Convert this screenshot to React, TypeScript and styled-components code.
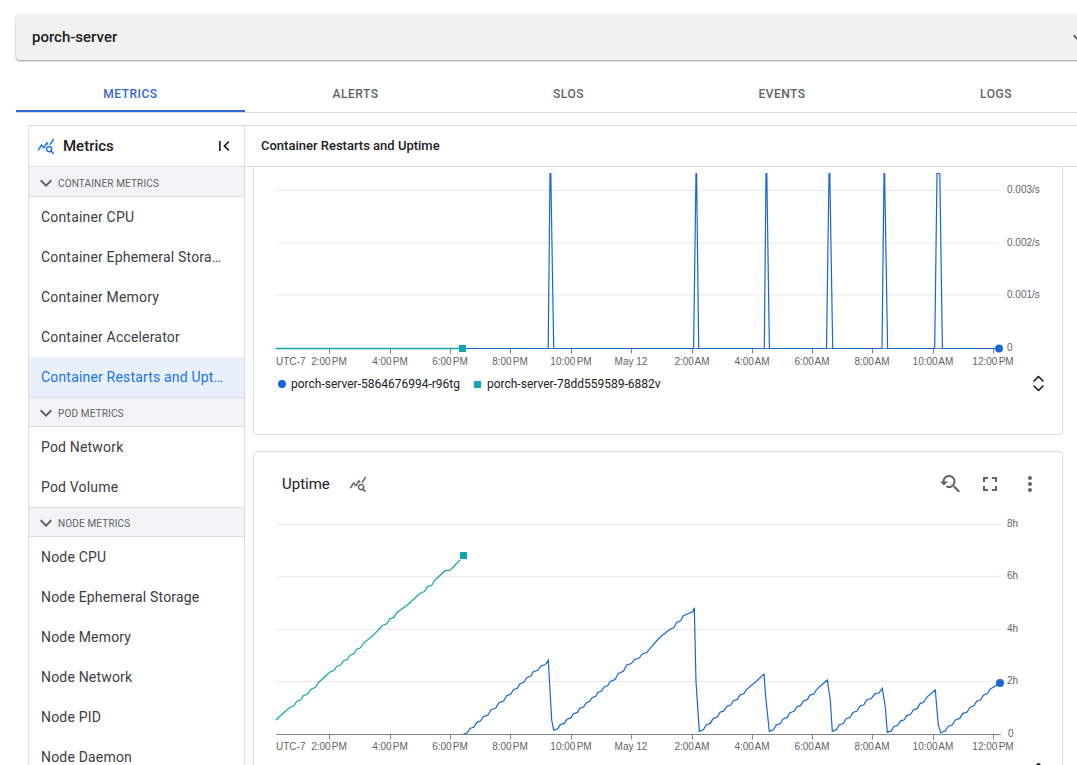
import React from "react";
import styled, { createGlobalStyle } from "styled-components";
import { ChevronsUpDown } from "lucide-react";
import {
  MdExpandMore,
  MdFirstPage,
  MdFullscreen,
  MdMoreVert,
  MdQueryStats,
  MdYoutubeSearchedFor,
} from "react-icons/md";

const BLUE = "#1967d2";
const TEAL = "#12a4af";
const LINE = "#dadce0";

const GlobalStyle = createGlobalStyle`
  html, body {
    margin: 0;
    height: 100%;
    overflow: hidden;
    background: #fff;
    font-family: Roboto, "Liberation Sans", sans-serif;
  }
`;

const Page = styled.div`
  box-sizing: border-box;
  width: 1115px;
  height: 765px;
  padding: 14px 16px 0;
  overflow: hidden;
  display: flex;
  flex-direction: column;
`;

const Header = styled.div`
  flex: none;
  height: 46px;
  display: flex;
  align-items: center;
  justify-content: space-between;
  padding: 0 8px 0 16px;
  background: #f1f1f1;
  border-radius: 4px;
  box-shadow: 0 1px 2px rgba(60, 64, 67, 0.55);
  font-size: 15px;
  font-weight: 500;
  color: #202124;
  svg {
    color: #5f6368;
    margin-top: 2px;
  }
`;

const TabBar = styled.div`
  flex: none;
  margin-top: 14px;
  display: grid;
  grid-template-columns: 229px 221px 205px 222px 206px;
  border-bottom: 1px solid ${LINE};
`;

const Tab = styled.div<{ $active?: boolean }>`
  box-sizing: border-box;
  height: 38px;
  padding-top: 4px;
  display: flex;
  align-items: center;
  justify-content: center;
  font-size: 12px;
  font-weight: 500;
  letter-spacing: 0.5px;
  color: ${(p) => (p.$active ? "#3367d6" : "#5f6368")};
  border-bottom: 2px solid ${(p) => (p.$active ? "#3367d6" : "transparent")};
`;

const Main = styled.div`
  flex: 1;
  min-height: 0;
  display: flex;
  margin: 12px -16px 0 12px;
  border-top: 1px solid ${LINE};
`;

const Sidebar = styled.div`
  box-sizing: border-box;
  flex: none;
  width: 217px;
  border-left: 1px solid ${LINE};
  border-right: 1px solid ${LINE};
  border-top-left-radius: 4px;
`;

const SidebarTitle = styled.div`
  box-sizing: border-box;
  height: 41px;
  display: flex;
  align-items: center;
  gap: 8px;
  padding: 0 10px 0 8px;
  border-bottom: 1px solid ${LINE};
  font-size: 15px;
  font-weight: 500;
  color: #202124;
  svg:first-child {
    color: #1a73e8;
  }
  svg:last-child {
    margin-left: auto;
  }
`;

const Group = styled.div`
  box-sizing: border-box;
  height: 30px;
  display: flex;
  align-items: center;
  padding: 2px 0 0 5px;
  background: #f1f3f4;
  border-top: 1px solid ${LINE};
  border-bottom: 1px solid ${LINE};
  font-size: 10px;
  letter-spacing: 0.15px;
  color: #5f6368;
  text-transform: uppercase;
  &:first-child {
    border-top: none;
    padding-top: 3px;
  }
`;

const Item = styled.div<{ $active?: boolean }>`
  box-sizing: border-box;
  height: 40px;
  line-height: 40px;
  padding: 0 20px 0 12px;
  font-size: 14px;
  letter-spacing: 0.18px;
  color: ${(p) => (p.$active ? "#1a73e8" : "#3c4043")};
  background: ${(p) => (p.$active ? "#e8f0fe" : "transparent")};
  white-space: nowrap;
  overflow: hidden;
  text-overflow: ellipsis;
`;

const Content = styled.div`
  flex: 1;
  min-width: 0;
  display: flex;
  flex-direction: column;
`;

const ContentTitle = styled.div`
  box-sizing: border-box;
  flex: none;
  height: 41px;
  display: flex;
  align-items: center;
  padding: 0 0 1px 16px;
  border-bottom: 1px solid ${LINE};
  font-size: 13px;
  font-weight: 500;
  color: #202124;
`;

const Cards = styled.div`
  flex: 1;
  min-height: 0;
  overflow: hidden;
  padding-left: 8px;
`;

const Card = styled.div<{ $scrolled?: boolean }>`
  box-sizing: border-box;
  width: 810px;
  border: 1px solid ${LINE};
  border-radius: 4px;
  ${(p) =>
    p.$scrolled
      ? `height: 268px; border-top: none; border-top-left-radius: 0; border-top-right-radius: 0;`
      : `margin-top: 16px;`}
`;

const CardHeader = styled.div`
  box-sizing: border-box;
  height: 58px;
  display: flex;
  align-items: center;
  padding: 6px 20px 0 28px;
  font-size: 15px;
  color: #202124;
  svg {
    color: #5f6368;
  }
`;

const CardTitle = styled.span`
  margin-right: 19px;
`;

const CardActions = styled.div`
  margin-left: auto;
  display: flex;
  gap: 16px;
`;

const Plot = styled.svg`
  display: block;
`;

const AxisText = styled.text<{ $date?: boolean }>`
  font-family: "Liberation Sans", Arial, sans-serif;
  font-size: 10px;
  fill: #5f6368;
  word-spacing: ${(p) => (p.$date ? 0 : -1.5)}px;
`;

const Legend = styled.div`
  height: 16px;
  margin-top: 6px;
  display: flex;
  align-items: center;
  padding: 0 13px 0 24px;
  font-size: 12px;
  color: #202124;
  svg {
    margin-left: auto;
    margin-top: -2px;
    color: #202124;
  }
`;

const Swatch = styled.span<{ $square?: boolean }>`
  flex: none;
  width: ${(p) => (p.$square ? 7 : 8)}px;
  height: ${(p) => (p.$square ? 7 : 8)}px;
  margin-right: ${(p) => (p.$square ? 6 : 5)}px;
  background: ${(p) => (p.$square ? TEAL : BLUE)};
  border-radius: ${(p) => (p.$square ? 0 : "50%")};
`;

const LegendName = styled.span`
  margin-right: 14px;
`;

// page coordinates, stepped a little the way sampled uptime looks
const stepped = (pts: number[][], step = 6) => {
  let d = `M${pts[0][0]} ${pts[0][1]}`;
  for (let i = 1; i < pts.length; i++) {
    const [x0, y0] = pts[i - 1];
    const [x1, y1] = pts[i];
    const n = Math.floor((x1 - x0) / step);
    if (n < 2) {
      d += `L${x1} ${y1}`;
      continue;
    }
    for (let k = 0; k < n; k++) {
      const xa = x0 + ((x1 - x0) * k) / n;
      const xb = x0 + ((x1 - x0) * (k + 1)) / n;
      const ya = y0 + ((y1 - y0) * k) / n;
      const yb = y0 + ((y1 - y0) * (k + 1)) / n;
      d += `L${(xa + (xb - xa) * 0.6).toFixed(1)} ${(ya + (yb - ya) * 0.25).toFixed(1)}`;
      d += `L${xb.toFixed(1)} ${yb.toFixed(1)}`;
    }
  }
  return d;
};

const uptimeTeal = [
  [276, 720], [280, 716], [290, 707.3], [303.3, 695.7], [318.3, 682.7], [330, 672],
  [350, 655.3], [363.3, 643.3], [373.3, 635.3], [382.7, 625.3], [396.7, 612.7],
  [408.3, 604.3], [420, 593.3], [435, 580], [445, 570.7], [450, 570.3], [460, 560],
];

const uptimeBlue = [
  [463.3, 734.3], [483.3, 716.7], [506.7, 695.7], [533.3, 671.7], [548.3, 660.3],
  [551.7, 720], [553.7, 730.3], [580, 708.3], [610, 681.7], [626.7, 665], [650, 648.3],
  [660, 637.3], [670, 629.3], [683.3, 615.7], [692.7, 611.7], [694.3, 607.7],
  [696, 681.7], [699.3, 731.3], [720, 712.3], [746.7, 689.3], [756.7, 681], [764, 674],
  [765.7, 696.7], [769.3, 731.3], [790, 712.7], [816.7, 689.3], [827.3, 680],
  [830.3, 700], [832.3, 731.3], [866.7, 700], [882.3, 688.3], [885.3, 706.7],
  [887.3, 732.3], [913.3, 710], [926.7, 697.3], [935.3, 690], [938.3, 725],
  [940.7, 732.7], [970, 707.3], [990, 689.3], [1000, 683],
];

const restartsBlue =
  "M462 348.5H548.2L550 173.5H550.8L553.7 348.5H693.6L696 173.5H696.6L698.7 348.5H764.3L766 173.5H766.8L769.4 348.5H826.5L829 173.5H829.8L832.7 348.5H882L884 173.5H884.6L887.6 348.5H934.7L937 173.5H939.8L942.4 348.5H999";

const ticks: [number, string][] = [
  [329, "2:00 PM"], [390, "4:00 PM"], [450, "6:00 PM"], [510, "8:00 PM"],
  [571, "10:00 PM"], [631, "May 12"], [692, "2:00 AM"], [752, "4:00 AM"],
  [812, "6:00 AM"], [872, "8:00 AM"], [933, "10:00 AM"], [993, "12:00 PM"],
];

const TimeAxis = ({ y, labelY }: { y: number; labelY: number }) => (
  <>
    <line x1={276} x2={1001} y1={y + 0.5} y2={y + 0.5} stroke="#80868b" />
    <AxisText x={276} y={labelY}>UTC-7</AxisText>
    {ticks.map(([x, label]) => (
      <g key={label}>
        <line x1={x + 0.5} x2={x + 0.5} y1={y} y2={y + 5.5} stroke="#80868b" />
        <AxisText x={x} y={labelY} textAnchor="middle" $date={label === "May 12"}>
          {label}
        </AxisText>
      </g>
    ))}
  </>
);

const GridRow = ({ y, label }: { y: number; label: string }) => (
  <>
    <line x1={276} x2={1001} y1={y} y2={y} stroke="#e8eaed" />
    <AxisText x={1007} y={y + 2.5}>{label}</AxisText>
  </>
);

const RestartsPlot = () => (
  <Plot width={808} height={203} viewBox="254 167 808 203">
    <GridRow y={190.5} label="0.003/s" />
    <GridRow y={243} label="0.002/s" />
    <GridRow y={295} label="0.001/s" />
    <TimeAxis y={348} labelY={364.5} />
    <AxisText x={1007} y={350.5}>0</AxisText>
    <path d="M276 348.5H462" stroke={TEAL} strokeWidth={1.3} fill="none" />
    <path d={restartsBlue} stroke={BLUE} strokeWidth={1.2} fill="none" />
    <rect x={459} y={345} width={7} height={7} fill={TEAL} />
    <circle cx={999} cy={348.5} r={4} fill={BLUE} />
  </Plot>
);

const UptimePlot = () => (
  <Plot width={808} height={247} viewBox="254 510 808 247">
    <GridRow y={524.5} label="8h" />
    <GridRow y={576.5} label="6h" />
    <GridRow y={629.5} label="4h" />
    <GridRow y={681.5} label="2h" />
    <TimeAxis y={734} labelY={749.5} />
    <AxisText x={1008} y={737}>0</AxisText>
    <path d={stepped(uptimeTeal)} stroke={TEAL} strokeWidth={1.2} fill="none" />
    <path d={stepped(uptimeBlue)} stroke={BLUE} strokeWidth={1.2} fill="none" />
    <rect x={460} y={552} width={7} height={7} fill={TEAL} />
    <circle cx={1000} cy={683} r={4} fill={BLUE} />
  </Plot>
);

const PodLegend = () => (
  <Legend>
    <Swatch />
    <LegendName>porch-server-5864676994-r96tg</LegendName>
    <Swatch $square />
    <span>porch-server-78dd559589-6882v</span>
    <ChevronsUpDown size={21} strokeWidth={1.8} />
  </Legend>
);

const sections: { name: string; items: string[] }[] = [
  {
    name: "Container Metrics",
    items: [
      "Container CPU",
      "Container Ephemeral Storage",
      "Container Memory",
      "Container Accelerator",
      "Container Restarts and Uptime",
    ],
  },
  { name: "Pod Metrics", items: ["Pod Network", "Pod Volume"] },
  {
    name: "Node Metrics",
    items: [
      "Node CPU",
      "Node Ephemeral Storage",
      "Node Memory",
      "Node Network",
      "Node PID",
      "Node Daemon",
    ],
  },
];

const tabs = ["Metrics", "Alerts", "SLOs", "Events", "Logs"];

export default function App() {
  return (
    <>
      <GlobalStyle />
      <Page>
        <Header>
          porch-server
          <MdExpandMore size={24} />
        </Header>
        <TabBar>
          {tabs.map((t, i) => (
            <Tab key={t} $active={i === 0}>
              {t.toUpperCase()}
            </Tab>
          ))}
        </TabBar>
        <Main>
          <Sidebar>
            <SidebarTitle>
              <MdQueryStats size={18} />
              Metrics
              <MdFirstPage size={20} />
            </SidebarTitle>
            <div>
              {sections.map((s) => (
                <React.Fragment key={s.name}>
                  <Group>
                    <MdExpandMore size={24} />
                    {s.name}
                  </Group>
                  {s.items.map((item) => (
                    <Item key={item} $active={item === "Container Restarts and Uptime"}>
                      {item}
                    </Item>
                  ))}
                </React.Fragment>
              ))}
            </div>
          </Sidebar>
          <Content>
            <ContentTitle>Container Restarts and Uptime</ContentTitle>
            <Cards>
              <Card $scrolled>
                <RestartsPlot />
                <PodLegend />
              </Card>
              <Card>
                <CardHeader>
                  <CardTitle>Uptime</CardTitle>
                  <MdQueryStats size={18} />
                  <CardActions>
                    <MdYoutubeSearchedFor size={24} />
                    <MdFullscreen size={24} />
                    <MdMoreVert size={24} />
                  </CardActions>
                </CardHeader>
                <UptimePlot />
                <PodLegend />
              </Card>
            </Cards>
          </Content>
        </Main>
      </Page>
    </>
  );
}
